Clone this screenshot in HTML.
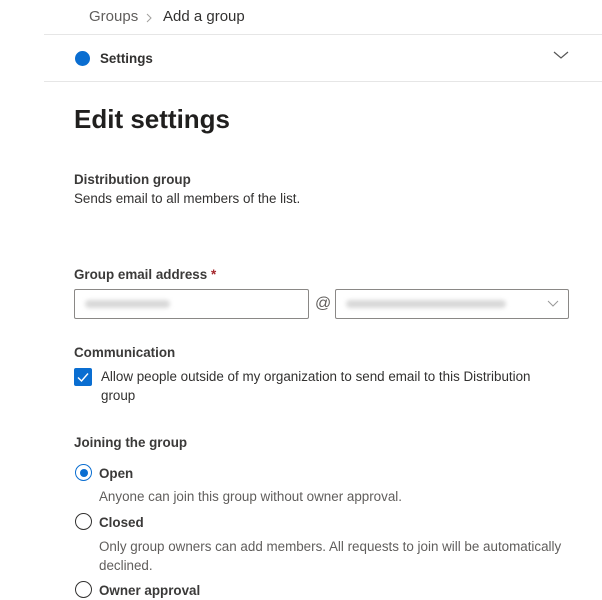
<!DOCTYPE html>
<html><head><meta charset="utf-8"><style>
body{margin:0;width:602px;height:600px;background:#fff;font-family:"Liberation Sans",sans-serif;color:#323130;position:relative;overflow:hidden}
.a{position:absolute;white-space:nowrap;line-height:1}
.t{font-size:13.4px}
.g{color:#605e5c}
.b{font-weight:bold}
.m{font-weight:bold;color:#3b3a39}
.hr{position:absolute;left:44px;right:0;height:1px;background:#e6e6e6}
.box{position:absolute;border:1px solid #8a8886;border-radius:2px;height:28px;top:289px}
.blur{position:absolute;top:10px;height:8px;border-radius:4px;background:#d8d8d8;filter:blur(2px)}
.radio{position:absolute;width:17px;height:17px;border:1px solid #323130;border-radius:50%;box-sizing:border-box}
</style></head><body>
<div class="a g" style="left:89px;top:9px;font-size:15px">Groups</div>
<svg style="position:absolute;left:146px;top:13px" width="7" height="10"><path d="M1 1 L5 5 L1 9" fill="none" stroke="#a19f9d" stroke-width="1"/></svg>
<div class="a" style="left:163px;top:9px;font-size:15px">Add a group</div>
<div class="hr" style="top:34px"></div>
<div style="position:absolute;left:75px;top:51px;width:15px;height:15px;border-radius:50%;background:#0a6ed1"></div>
<div class="a b t" style="left:100px;top:52px">Settings</div>
<svg style="position:absolute;left:553px;top:50px" width="16" height="10"><path d="M1 2 L8 8 L15 2" fill="none" stroke="#555" stroke-width="1.2"/></svg>
<div class="hr" style="top:81px"></div>
<div class="a b" style="left:74px;top:106px;font-size:26px;color:#201f1e">Edit settings</div>
<div class="a t m" style="left:74px;top:173px">Distribution group</div>
<div class="a t" style="left:74px;top:192px">Sends email to all members of the list.</div>
<div class="a t m" style="left:74px;top:268px">Group email address <span style="color:#a4262c">*</span></div>
<div class="box" style="left:74px;width:233px"><div class="blur" style="left:10px;width:85px"></div></div>
<div class="a g" style="left:315px;top:296px;font-size:16px">@</div>
<div class="box" style="left:335px;width:232px"><div class="blur" style="left:10px;width:160px"></div>
<svg style="position:absolute;left:211px;top:10px" width="12" height="8"><path d="M1 1 L6 6 L11 1" fill="none" stroke="#999" stroke-width="1"/></svg></div>
<div class="a t m" style="left:74px;top:346px">Communication</div>
<div style="position:absolute;left:74px;top:368px;width:18px;height:18px;background:#0a6ed1;border-radius:2px"></div>
<svg style="position:absolute;left:74px;top:368px" width="18" height="18"><path d="M4 9.5 L7.5 13 L14 5.5" fill="none" stroke="#fff" stroke-width="1.4"/></svg>
<div class="a t" style="left:101px;top:370px">Allow people outside of my organization to send email to this Distribution</div>
<div class="a t" style="left:101px;top:389px">group</div>
<div class="a t m" style="left:74px;top:436px">Joining the group</div>
<div class="radio" style="left:75px;top:464px;border-color:#0a6ed1"><div style="position:absolute;left:3.5px;top:3.5px;width:8px;height:8px;border-radius:50%;background:#0a6ed1"></div></div>
<div class="a t m" style="left:99px;top:467px">Open</div>
<div class="a t g" style="left:99px;top:490px">Anyone can join this group without owner approval.</div>
<div class="radio" style="left:75px;top:513px"></div>
<div class="a t m" style="left:99px;top:516px">Closed</div>
<div class="a t g" style="left:99px;top:540px">Only group owners can add members. All requests to join will be automatically</div>
<div class="a t g" style="left:99px;top:559px">declined.</div>
<div class="radio" style="left:75px;top:581px"></div>
<div class="a t m" style="left:99px;top:584px">Owner approval</div>
</body></html>
